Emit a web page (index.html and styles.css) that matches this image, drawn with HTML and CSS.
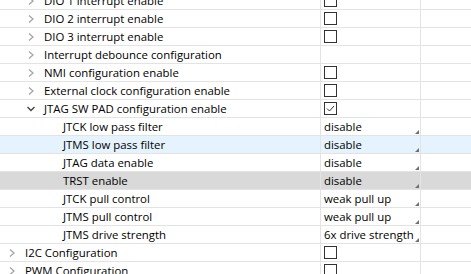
FILE: index.html
```html
<!DOCTYPE html>
<html lang="en">
<head>
  <meta charset="UTF-8">
  <title>Configuration tree</title>
  <link rel="stylesheet" href="styles.css">
</head>
<body>
  <div class="tree">
    <div class="row">
      <div class="name lvl1"><span class="twisty closed"></span>DIO 1 interrupt enable</div>
      <div class="value"><span class="check"></span></div>
      <div class="extra"></div>
    </div>
    <div class="row">
      <div class="name lvl1"><span class="twisty closed"></span>DIO 2 interrupt enable</div>
      <div class="value"><span class="check"></span></div>
      <div class="extra"></div>
    </div>
    <div class="row">
      <div class="name lvl1"><span class="twisty closed"></span>DIO 3 interrupt enable</div>
      <div class="value"><span class="check"></span></div>
      <div class="extra"></div>
    </div>
    <div class="row">
      <div class="name lvl1"><span class="twisty closed"></span>Interrupt debounce configuration</div>
      <div class="value"></div>
      <div class="extra"></div>
    </div>
    <div class="row">
      <div class="name lvl1"><span class="twisty closed"></span>NMI configuration enable</div>
      <div class="value"><span class="check"></span></div>
      <div class="extra"></div>
    </div>
    <div class="row">
      <div class="name lvl1"><span class="twisty closed"></span>External clock configuration enable</div>
      <div class="value"><span class="check"></span></div>
      <div class="extra"></div>
    </div>
    <div class="row">
      <div class="name lvl1"><span class="twisty open"></span>JTAG SW PAD configuration enable</div>
      <div class="value"><span class="check checked"></span></div>
      <div class="extra"></div>
    </div>
    <div class="row">
      <div class="name lvl2"><span class="twisty"></span>JTCK low pass filter</div>
      <div class="value combo">disable</div>
      <div class="extra"></div>
    </div>
    <div class="row hover">
      <div class="name lvl2"><span class="twisty"></span>JTMS low pass filter</div>
      <div class="value combo">disable</div>
      <div class="extra"></div>
    </div>
    <div class="row">
      <div class="name lvl2"><span class="twisty"></span>JTAG data enable</div>
      <div class="value combo">disable</div>
      <div class="extra"></div>
    </div>
    <div class="row selected">
      <div class="name lvl2"><span class="twisty"></span>TRST enable</div>
      <div class="value combo">disable</div>
      <div class="extra"></div>
    </div>
    <div class="row">
      <div class="name lvl2"><span class="twisty"></span>JTCK pull control</div>
      <div class="value combo">weak pull up</div>
      <div class="extra"></div>
    </div>
    <div class="row">
      <div class="name lvl2"><span class="twisty"></span>JTMS pull control</div>
      <div class="value combo">weak pull up</div>
      <div class="extra"></div>
    </div>
    <div class="row">
      <div class="name lvl2"><span class="twisty"></span>JTMS drive strength</div>
      <div class="value combo">6x drive strength</div>
      <div class="extra"></div>
    </div>
    <div class="row">
      <div class="name lvl0"><span class="twisty closed"></span>I2C Configuration</div>
      <div class="value"><span class="check"></span></div>
      <div class="extra"></div>
    </div>
    <div class="row">
      <div class="name lvl0"><span class="twisty closed"></span>PWM Configuration</div>
      <div class="value"><span class="check"></span></div>
      <div class="extra"></div>
    </div>
  </div>
</body>
</html>
```

FILE: styles.css
```css
body {
  margin: 0;
  background-color: #ffffff;
  font-family: "Open Sans", "Noto Sans", sans-serif;
  font-size: 11.4px;
  color: #000000;
  overflow: hidden;
}
.tree {
  margin-top: -9px;
}
.row {
  display: grid;
  grid-template-columns: 321px 100px 1fr;
  height: 17px;
  border-top: 1px solid #e3e3e3;
}
.row.hover {
  background-color: #e5f3ff;
}
.row.selected {
  background-color: #d9d9d9;
}
.name, .value {
  border-right: 1px solid #e3e3e3;
  display: flex;
  align-items: center;
  white-space: nowrap;
  overflow: hidden;
}
.value {
  position: relative;
  padding-left: 3px;
}
.lvl0 { padding-left: 4px; }
.lvl1 { padding-left: 23px; }
.lvl2 { padding-left: 42px; }
.twisty {
  width: 16px;
  height: 17px;
  margin-right: 5px;
  flex: none;
  background-repeat: no-repeat;
  background-position: center;
}
.twisty.closed {
  background-image: url("data:image/svg+xml,%3Csvg xmlns='http://www.w3.org/2000/svg' width='8' height='10'%3E%3Cpolyline points='2,1.5 6,5 2,8.5' fill='none' stroke='%23a6a6a6' stroke-width='1.3'/%3E%3C/svg%3E");
}
.twisty.open {
  background-image: url("data:image/svg+xml,%3Csvg xmlns='http://www.w3.org/2000/svg' width='10' height='8'%3E%3Cpolyline points='1.5,2 5,5.5 8.5,2' fill='none' stroke='%23404040' stroke-width='1.3'/%3E%3C/svg%3E");
}
.check {
  width: 11px;
  height: 11px;
  border: 1px solid #333333;
  background-color: #ffffff;
  box-sizing: content-box;
}
.check.checked {
  background-image: url("data:image/svg+xml,%3Csvg xmlns='http://www.w3.org/2000/svg' width='11' height='11'%3E%3Cpolyline points='2,5.5 4.5,8 9,3' fill='none' stroke='%23333333' stroke-width='1'/%3E%3C/svg%3E");
}
.combo::after {
  content: "";
  position: absolute;
  right: 1px;
  bottom: 1px;
  width: 0;
  height: 0;
  border-left: 4px solid transparent;
  border-bottom: 4px solid #707070;
}
```
